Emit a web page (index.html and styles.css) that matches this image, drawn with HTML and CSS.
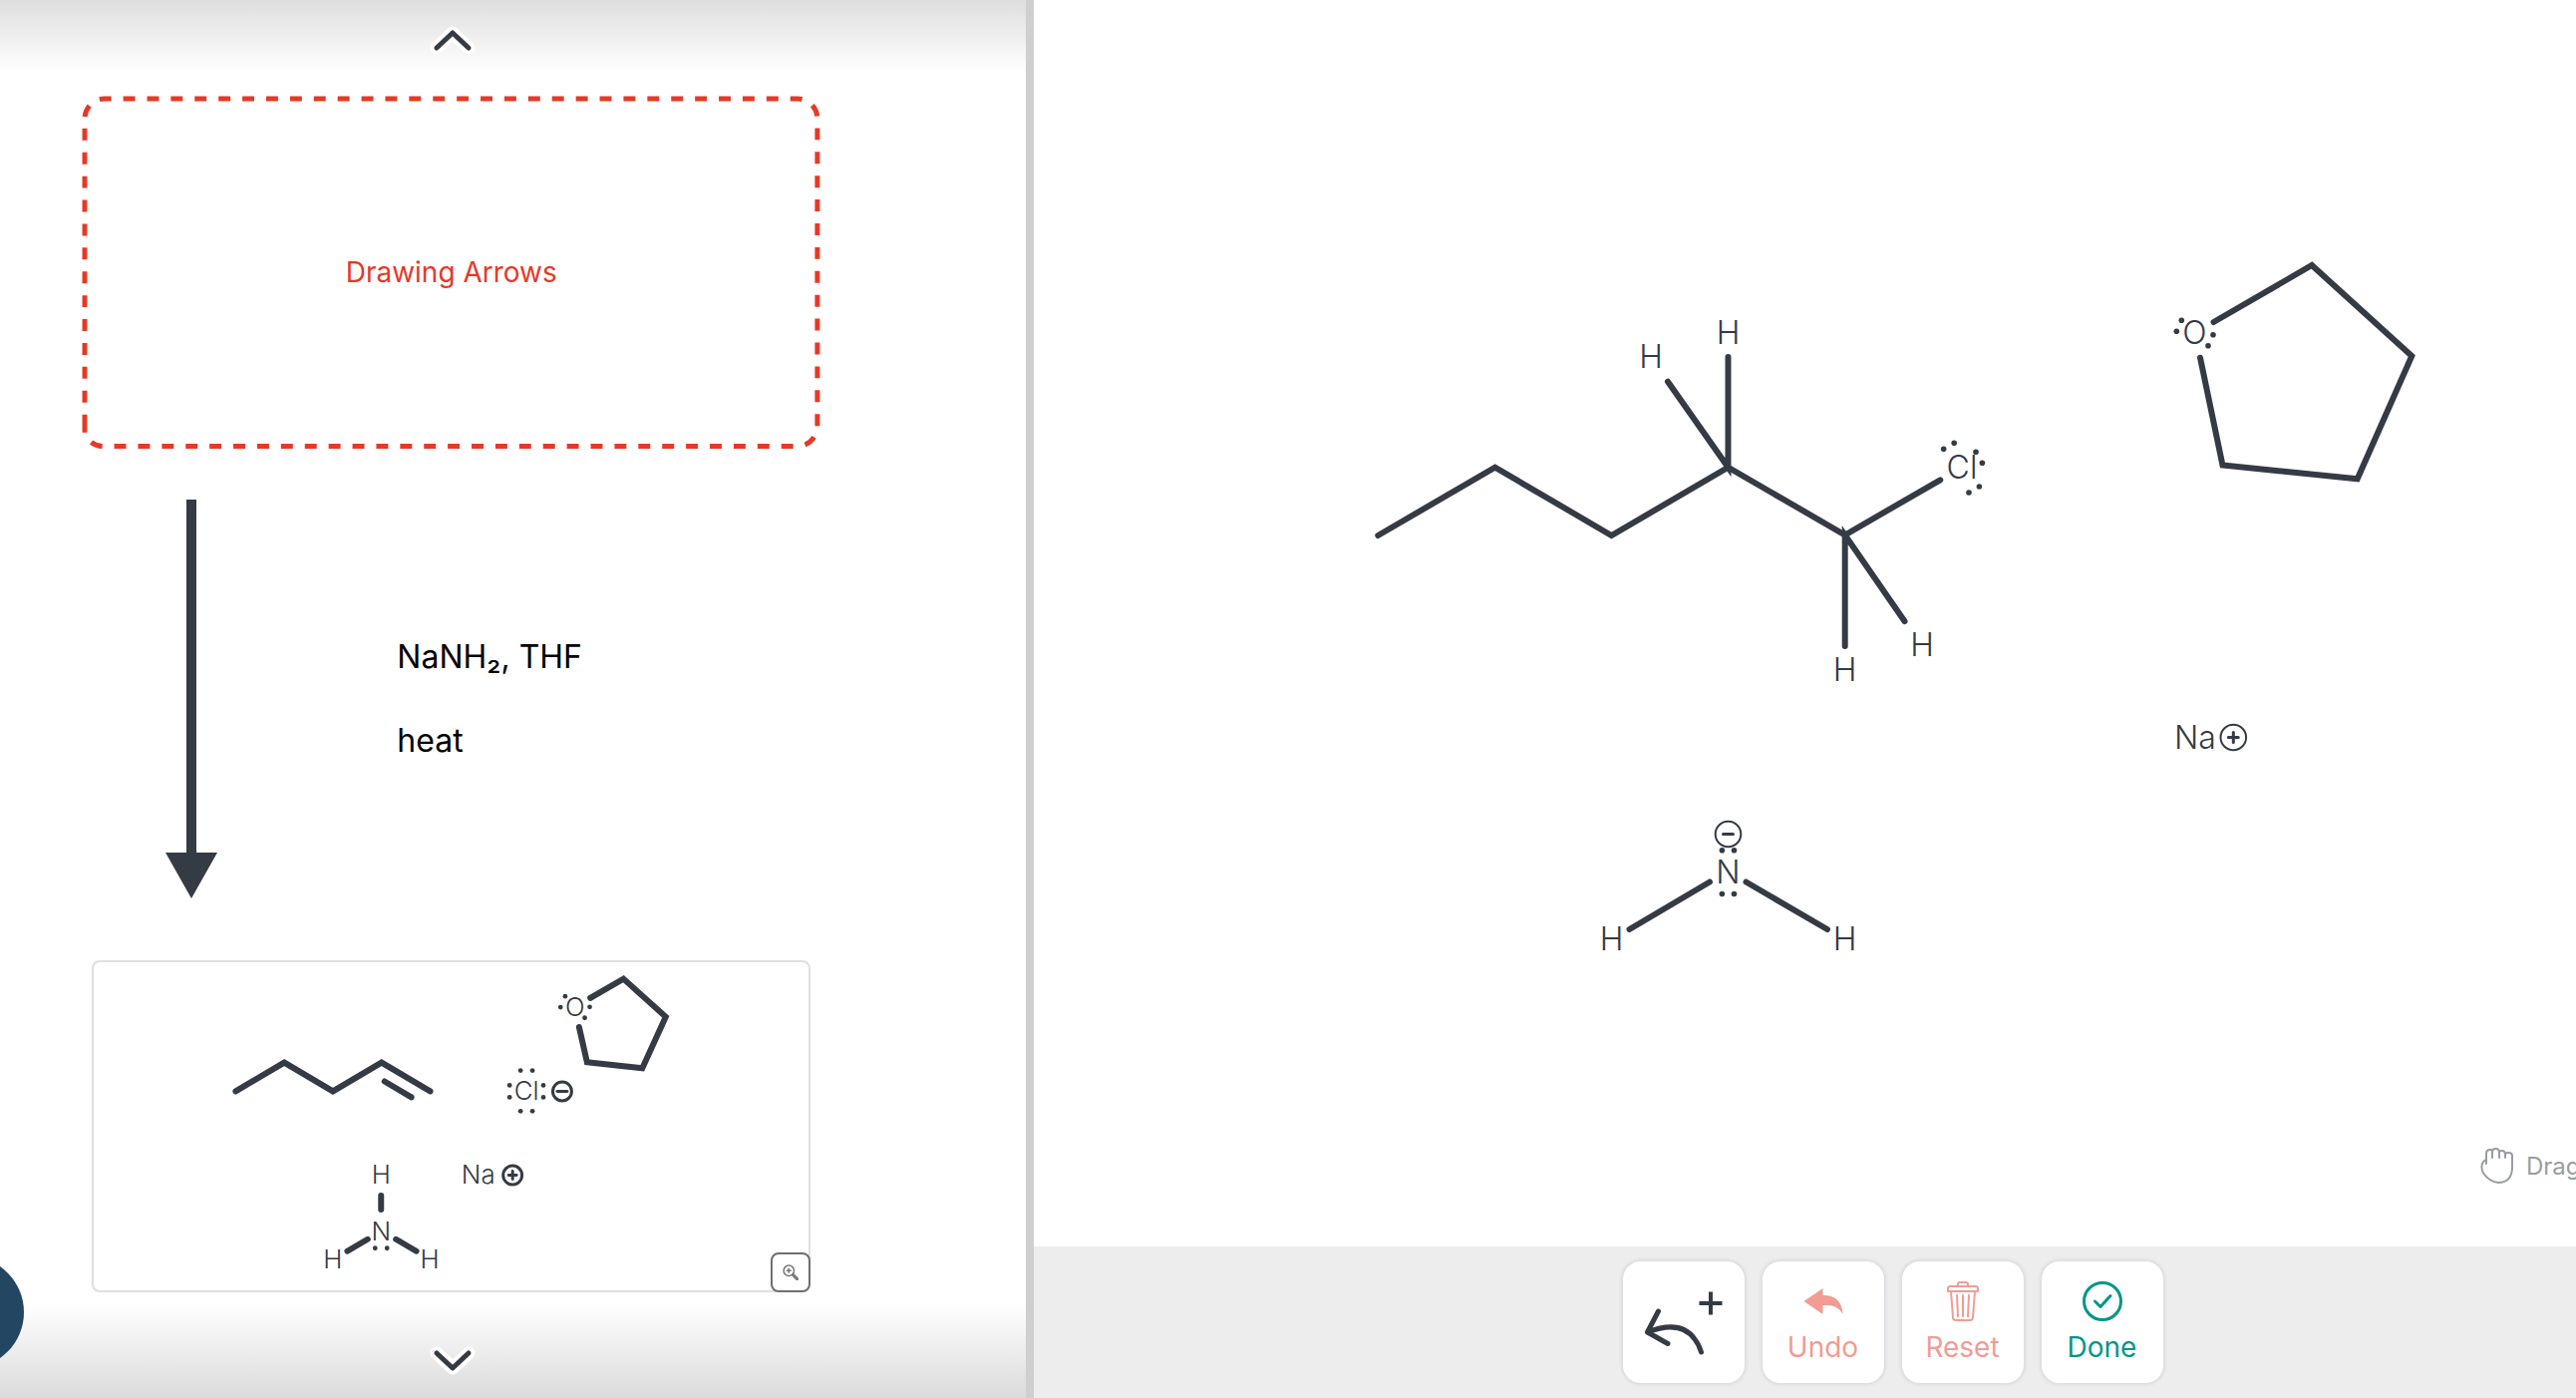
FILE: index.html
```html
<!DOCTYPE html>
<html lang="en">
<head>
    <meta charset="UTF-8">
    <meta name="viewport" content="width=device-width, initial-scale=1.0">
    <title>Drawing Arrows</title>
    <link rel="stylesheet" href="styles.css">
</head>
<body>
    <div class="app">
        <aside class="steps">
            <button class="scroll-btn scroll-up" aria-label="Scroll up">
                <svg class="chevron" viewBox="0 0 48 32">
                    <path class="halo" d="M8 24 L24 9 L40 24"/>
                    <path class="line" d="M8 24 L24 9 L40 24"/>
                </svg>
            </button>

            <div class="step-list">
                <div class="drawing-box">
                    <svg class="dashes" viewBox="0 0 744 356">
                        <path d="M3 333 V22 A20 20 0 0 1 23 3 H721 A20 20 0 0 1 741 23 V333 A20 20 0 0 1 721 353 H23 A20 20 0 0 1 3 340 Z"/>
                    </svg>
                    <span>Drawing Arrows</span>
                </div>

                <div class="reaction">
                    <svg class="reaction-arrow" viewBox="0 0 52 400">
                        <path d="M21 0 H31 V354 H52 L26 400 L0 354 H21 Z"/>
                    </svg>
                    <div class="reagents">
                        <p>NaNH₂, THF</p>
                        <p>heat</p>
                    </div>
                </div>

                <div class="product">
                    <svg class="molecule small" viewBox="95 966 720 331">
                        <!-- pentene -->
                        <path class="bond" d="M238 1096 L287 1067 L336 1096 L385 1067 L434 1096 M388 1086 L415 1102"/>
                        <!-- chloride -->
                        <text x="531" y="1105">Cl</text>
                        <g class="dots">
                            <circle cx="525" cy="1075" r="2.4"/><circle cx="537" cy="1075" r="2.4"/>
                            <circle cx="514" cy="1090" r="2.4"/><circle cx="514" cy="1102" r="2.4"/>
                            <circle cx="548" cy="1090" r="2.4"/><circle cx="548" cy="1102" r="2.4"/>
                            <circle cx="525" cy="1116" r="2.4"/><circle cx="537" cy="1116" r="2.4"/>
                        </g>
                        <circle class="ring" cx="567" cy="1096" r="9.5"/>
                        <path class="sign" d="M562 1096 H572"/>
                        <!-- THF -->
                        <path class="bond" d="M595.3 1002 L628.7 982.7 L671.3 1021 L647.7 1072.7 L592 1066.7 L584 1031.3"/>
                        <text x="580" y="1020">O</text>
                        <g class="dots">
                            <circle cx="570" cy="1000.3" r="2.4"/><circle cx="565.3" cy="1011.3" r="2.4"/>
                            <circle cx="594.7" cy="1011" r="2.4"/><circle cx="589.7" cy="1022" r="2.4"/>
                        </g>
                        <!-- sodium -->
                        <text x="482.5" y="1189">Na</text>
                        <circle class="ring" cx="517" cy="1180.5" r="9.5"/>
                        <path class="sign bold" d="M513 1180.5 H521 M517 1176.5 V1184.5"/>
                        <!-- ammonia -->
                        <text x="384.5" y="1189">H</text>
                        <text x="384.5" y="1246">N</text>
                        <text x="336" y="1274">H</text>
                        <text x="433.5" y="1274">H</text>
                        <path class="bond" d="M384.5 1201 V1215 M371 1245 L350.5 1257 M399.5 1245 L420 1257"/>
                        <g class="dots">
                            <circle cx="378.5" cy="1254" r="2.4"/><circle cx="390.5" cy="1254" r="2.4"/>
                        </g>
                    </svg>
                    <button class="zoom-btn" aria-label="Zoom in">
                        <svg viewBox="0 0 16 16">
                            <circle cx="6.3" cy="6.3" r="5.2"/>
                            <path d="M6.3 3.8 V8.8 M3.8 6.3 H8.8"/>
                            <path class="handle" d="M10.6 10.6 L14.6 14.6"/>
                        </svg>
                    </button>
                </div>
            </div>

            <button class="scroll-btn scroll-down" aria-label="Scroll down">
                <svg class="chevron" viewBox="0 0 48 32">
                    <path class="halo" d="M8 8 L24 23 L40 8"/>
                    <path class="line" d="M8 8 L24 23 L40 8"/>
                </svg>
            </button>
            <button class="help-bubble" aria-label="Help"></button>
        </aside>

        <main class="workspace">
            <div class="canvas">
                <svg class="molecule" viewBox="1037 0 1547 1250">
                    <!-- 1-chloropentane -->
                    <path class="bond" d="M1382.3 537 L1499.7 468.7 L1616.5 537 L1733.5 468.7 L1850.7 536.5 L1946.3 481.3"/>
                    <path class="bond" d="M1733.5 358 V468.7 L1673 382.7 M1850.7 648 V536.5 L1910.5 623"/>
                    <text x="1733.5" y="345">H</text>
                    <text x="1656" y="369">H</text>
                    <text x="1850.7" y="683">H</text>
                    <text x="1928" y="658">H</text>
                    <text x="1968" y="480">Cl</text>
                    <g class="dots">
                        <circle cx="1949.7" cy="450.3" r="2.8"/><circle cx="1960.2" cy="444.3" r="2.8"/>
                        <circle cx="1982" cy="453.3" r="2.8"/><circle cx="1988.4" cy="464.3" r="2.8"/>
                        <circle cx="1985.4" cy="488" r="2.8"/><circle cx="1975" cy="494" r="2.8"/>
                    </g>
                    <!-- THF -->
                    <path class="bond" d="M2220.5 323 L2319 266 L2419.3 357 L2364.7 480.3 L2229.5 466.5 L2207 358.7"/>
                    <text x="2201.5" y="345">O</text>
                    <g class="dots">
                        <circle cx="2188.3" cy="321.3" r="2.8"/><circle cx="2183.3" cy="332.3" r="2.8"/>
                        <circle cx="2220" cy="335.7" r="2.8"/><circle cx="2215" cy="346.7" r="2.8"/>
                    </g>
                    <!-- sodium -->
                    <text x="2202" y="751">Na</text>
                    <circle class="ring" cx="2240.3" cy="739.5" r="12.8"/>
                    <path class="sign bold" d="M2235.3 739.5 H2245.3 M2240.3 734.5 V744.5"/>
                    <!-- amide -->
                    <circle class="ring" cx="1733.5" cy="836.5" r="12.8"/>
                    <path class="sign bold" d="M1728.5 836.5 H1738.5"/>
                    <text x="1733.5" y="886">N</text>
                    <text x="1616.5" y="953">H</text>
                    <text x="1850.5" y="953">H</text>
                    <path class="bond" d="M1715 884.5 L1634.5 932 M1751.5 884.5 L1833 932"/>
                    <g class="dots">
                        <circle cx="1727.4" cy="852.7" r="2.8"/><circle cx="1739.5" cy="852.7" r="2.8"/>
                        <circle cx="1727.4" cy="896.5" r="2.8"/><circle cx="1739.5" cy="896.5" r="2.8"/>
                    </g>
                </svg>
                <div class="drag-hint">
                    <svg viewBox="0 0 34 38">
                        <path d="M6 17 V7 Q6 3 10 3 Q12 3 12 5 Q12 2 15.500 2 Q19 2 19 6 Q19 4 21.500 4 Q25 4 25 8 Q25 6 28 6 Q32 6 32 9 V22 Q31 36 18 36 Q9 35 3.500 27 Q1 24 1.500 19 Q2 15 5.500 13 M12 5 V11 M19 6 V11 M25 8 V11"/>
                    </svg>
                    <span>Drag</span>
                </div>
            </div>

            <div class="toolbar">
                <button class="tool tool-arrow" aria-label="Add arrow">
                    <svg viewBox="0 0 122 122">
                        <path class="curve" d="M35.500 50 L24.500 71 L45 82.500 M24.500 71 Q58 58 72 78 Q76 83 78.500 91"/>
                        <path class="plus" d="M76.500 42 H99.500 M88 30.500 V53.500"/>
                    </svg>
                </button>
                <button class="tool tool-muted">
                    <svg viewBox="0 0 40 40">
                        <path class="solid" d="M0.500 20 L19.500 7 V14 C33 14 39 21 39.500 33 C35 25 30 24 19.500 24 V33 Z"/>
                    </svg>
                    <span>Undo</span>
                </button>
                <button class="tool tool-muted">
                    <svg viewBox="0 0 40 40">
                        <path d="M15 5 V3 Q15 1 17 1 H23 Q25 1 25 3 V5 M8 5 H32 Q35 5 35 7 V10 H5 V7 Q5 5 8 5 Z M8 10 L10 36 Q10 39 13 39 H27 Q30 39 30 36 L32 10 M14 14 L15 35 M20 14 V35 M26 14 L25 35"/>
                    </svg>
                    <span>Reset</span>
                </button>
                <button class="tool tool-done">
                    <svg viewBox="0 0 40 40">
                        <circle cx="20" cy="20" r="18.500"/>
                        <path d="M12.500 20 L18 25.500 L28 14.500"/>
                    </svg>
                    <span>Done</span>
                </button>
            </div>
        </main>
    </div>
</body>
</html>
```

FILE: styles.css
```css
* {
    margin: 0;
    padding: 0;
    box-sizing: border-box;
}

body {
    font-family: Inter, 'Noto Sans', sans-serif;
    background: #fff;
    color: #353b45;
    overflow: hidden;
}

button {
    border: none;
    background: none;
    font-family: inherit;
    cursor: pointer;
}

svg {
    display: block;
}

.app {
    display: grid;
    grid-template-columns: 1037fr 1547fr;
    min-height: 100vh;
}

/* left panel */
.steps {
    position: relative;
    border-right: 8px solid #cfcfcf;
    overflow: hidden;
}

.scroll-btn {
    display: flex;
    justify-content: center;
    width: 100%;
    height: 96px;
    padding: 24px 121px 0 0;
}

.scroll-up {
    background: linear-gradient(#dedede, #fff 72px);
}

.scroll-down {
    position: absolute;
    left: 0;
    bottom: 0;
    padding-top: 41px;
    background: linear-gradient(transparent, #dadada);
}

.chevron {
    width: 48px;
    height: 32px;
    fill: none;
    stroke-linejoin: round;
    stroke-linecap: round;
}

.chevron .halo {
    stroke: #fff;
    stroke-width: 13;
}

.chevron .line {
    stroke: #353b45;
    stroke-width: 5;
}

.step-list {
    padding: 0 20% 0 8%;
}

.drawing-box {
    position: relative;
    display: flex;
    align-items: center;
    justify-content: center;
    color: #e63926;
    font-size: 28px;
}

.drawing-box .dashes {
    width: 100%;
    fill: none;
    stroke: #e63926;
    stroke-width: 5;
    stroke-dasharray: 12 12;
}

.drawing-box span {
    position: absolute;
}

.reaction {
    display: flex;
    align-items: center;
    gap: 180px;
    padding: 50px 84px 62px;
}

.reaction-arrow {
    width: 52px;
    height: 400px;
    fill: #353b45;
}

.reagents {
    display: grid;
    gap: 40px;
    color: #000;
    font-size: 32px;
    line-height: 44px;
}

.product {
    position: relative;
    margin: 0 10px;
    border: 2px solid #dfdfdf;
    border-radius: 8px;
}

.zoom-btn {
    position: absolute;
    right: -2px;
    bottom: -2px;
    display: flex;
    align-items: center;
    justify-content: center;
    width: 40px;
    height: 40px;
    border: 2px solid #6f6f6f;
    border-radius: 8px;
    background: #fff;
}

.zoom-btn svg {
    width: 16px;
    height: 16px;
    fill: none;
    stroke: #777;
    stroke-width: 1.5;
}

.zoom-btn .handle {
    stroke-width: 3;
    stroke-linecap: round;
}

.help-bubble {
    position: absolute;
    left: -88px;
    bottom: 32px;
    width: 112px;
    height: 112px;
    border-radius: 50%;
    background: #234663;
}

/* molecules */
.molecule {
    width: 100%;
    fill: #353b45;
    font-size: 32px;
    font-weight: 300;
    text-anchor: middle;
}

.molecule.small {
    font-size: 26px;
}

.bond {
    fill: none;
    stroke: #353b45;
    stroke-width: 6;
    stroke-linecap: round;
    stroke-linejoin: miter;
}

.ring,
.sign {
    fill: none;
    stroke: #353b45;
    stroke-width: 2;
    stroke-linecap: round;
}

.small .ring {
    stroke-width: 3;
}

.small .sign {
    stroke-width: 3;
}

.sign.bold {
    stroke-width: 3;
}

/* right panel */
.workspace {
    display: flex;
    flex-direction: column;
    min-width: 0;
}

.canvas {
    position: relative;
    flex: 1;
    overflow: hidden;
}

.drag-hint {
    position: absolute;
    left: 1451px;
    bottom: 62px;
    display: flex;
    align-items: center;
    gap: 12px;
    color: #999da1;
    font-size: 24px;
    white-space: nowrap;
}

.drag-hint svg {
    width: 34px;
    height: 38px;
    fill: none;
    stroke: #999da1;
    stroke-width: 2;
    stroke-linejoin: round;
    stroke-linecap: round;
}

.toolbar {
    display: flex;
    justify-content: center;
    gap: 18px;
    padding: 15px 0 15px 176px;
    background: #ededed;
    border-bottom: 2px solid #f6f6f6;
}

.tool {
    display: flex;
    flex-direction: column;
    align-items: center;
    gap: 4px;
    width: 122px;
    height: 122px;
    padding-top: 20px;
    border-radius: 18px;
    background: #fff;
    box-shadow: 0 0 3px 2px #dcdce0;
    font-size: 28px;
    line-height: 44px;
}

.tool svg {
    width: 40px;
    height: 40px;
    fill: none;
    stroke: currentColor;
    stroke-width: 2;
    stroke-linecap: round;
    stroke-linejoin: round;
}

.tool .solid {
    fill: currentColor;
    stroke: none;
}

.tool-arrow {
    padding: 0;
    color: #353b45;
}

.tool-arrow svg {
    width: 122px;
    height: 122px;
}

.tool-arrow .curve {
    stroke-width: 5;
}

.tool-arrow .plus {
    stroke-width: 4;
    stroke-linecap: butt;
}

.tool-muted {
    color: #f19c94;
}

.tool-done {
    color: #009688;
}

.tool-done svg {
    stroke-width: 3;
}
```
